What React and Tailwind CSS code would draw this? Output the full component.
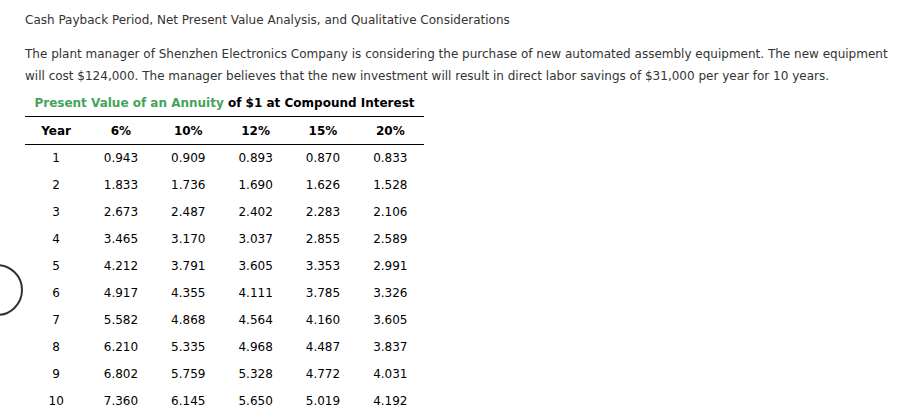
import React from 'react';

const rates = ['6%', '10%', '12%', '15%', '20%'];

const rows = [
  [1, '0.943', '0.909', '0.893', '0.870', '0.833'],
  [2, '1.833', '1.736', '1.690', '1.626', '1.528'],
  [3, '2.673', '2.487', '2.402', '2.283', '2.106'],
  [4, '3.465', '3.170', '3.037', '2.855', '2.589'],
  [5, '4.212', '3.791', '3.605', '3.353', '2.991'],
  [6, '4.917', '4.355', '4.111', '3.785', '3.326'],
  [7, '5.582', '4.868', '4.564', '4.160', '3.605'],
  [8, '6.210', '5.335', '4.968', '4.487', '3.837'],
  [9, '6.802', '5.759', '5.328', '4.772', '4.031'],
  [10, '7.360', '6.145', '5.650', '5.019', '4.192'],
];

function App() {
  return (
    <div className="relative h-[420px] w-[909px] overflow-hidden bg-white font-['DejaVu_Sans',Verdana,sans-serif] text-[12px] text-[#333]">
      {/* dangling circle at the left edge */}
      <div className="absolute left-[-29px] top-[264px] h-[52px] w-[52px] rounded-full border-[2.5px] border-[#333]" />

      <div className="px-[25px] pt-[11px]">
        <p className="leading-[18px]">
          Cash Payback Period, Net Present Value Analysis, and Qualitative Considerations
        </p>

        <p className="mt-[14px] w-[872px] leading-[22px]">
          The plant manager of Shenzhen Electronics Company is considering the purchase of new automated assembly
          equipment. The new equipment will cost $124,000. The manager believes that the new investment will result
          in direct labor savings of $31,000 per year for 10 years.
        </p>

        <div className="mt-[7px] w-[399px]">
          <div className="text-center font-bold leading-[18px] text-black">
            <span className="text-[#45a457]">Present Value of an Annuity</span> of $1 at Compound Interest
          </div>
          <table className="mt-[4px] w-full border-collapse text-black">
            <thead>
              <tr className="border-y border-black">
                <th className="h-[28px] w-[62px] text-center font-bold">Year</th>
                {rates.map((r) => (
                  <th key={r} className="h-[28px] text-center font-bold">
                    {r}
                  </th>
                ))}
              </tr>
            </thead>
            <tbody>
              {rows.map((row) => (
                <tr key={row[0]}>
                  {row.map((cell, i) => (
                    <td key={i} className={`h-[27px] text-center ${i === 0 ? 'w-[62px]' : 'w-[67px]'}`}>
                      {cell}
                    </td>
                  ))}
                </tr>
              ))}
            </tbody>
          </table>
        </div>
      </div>
    </div>
  );
}

export default App;
